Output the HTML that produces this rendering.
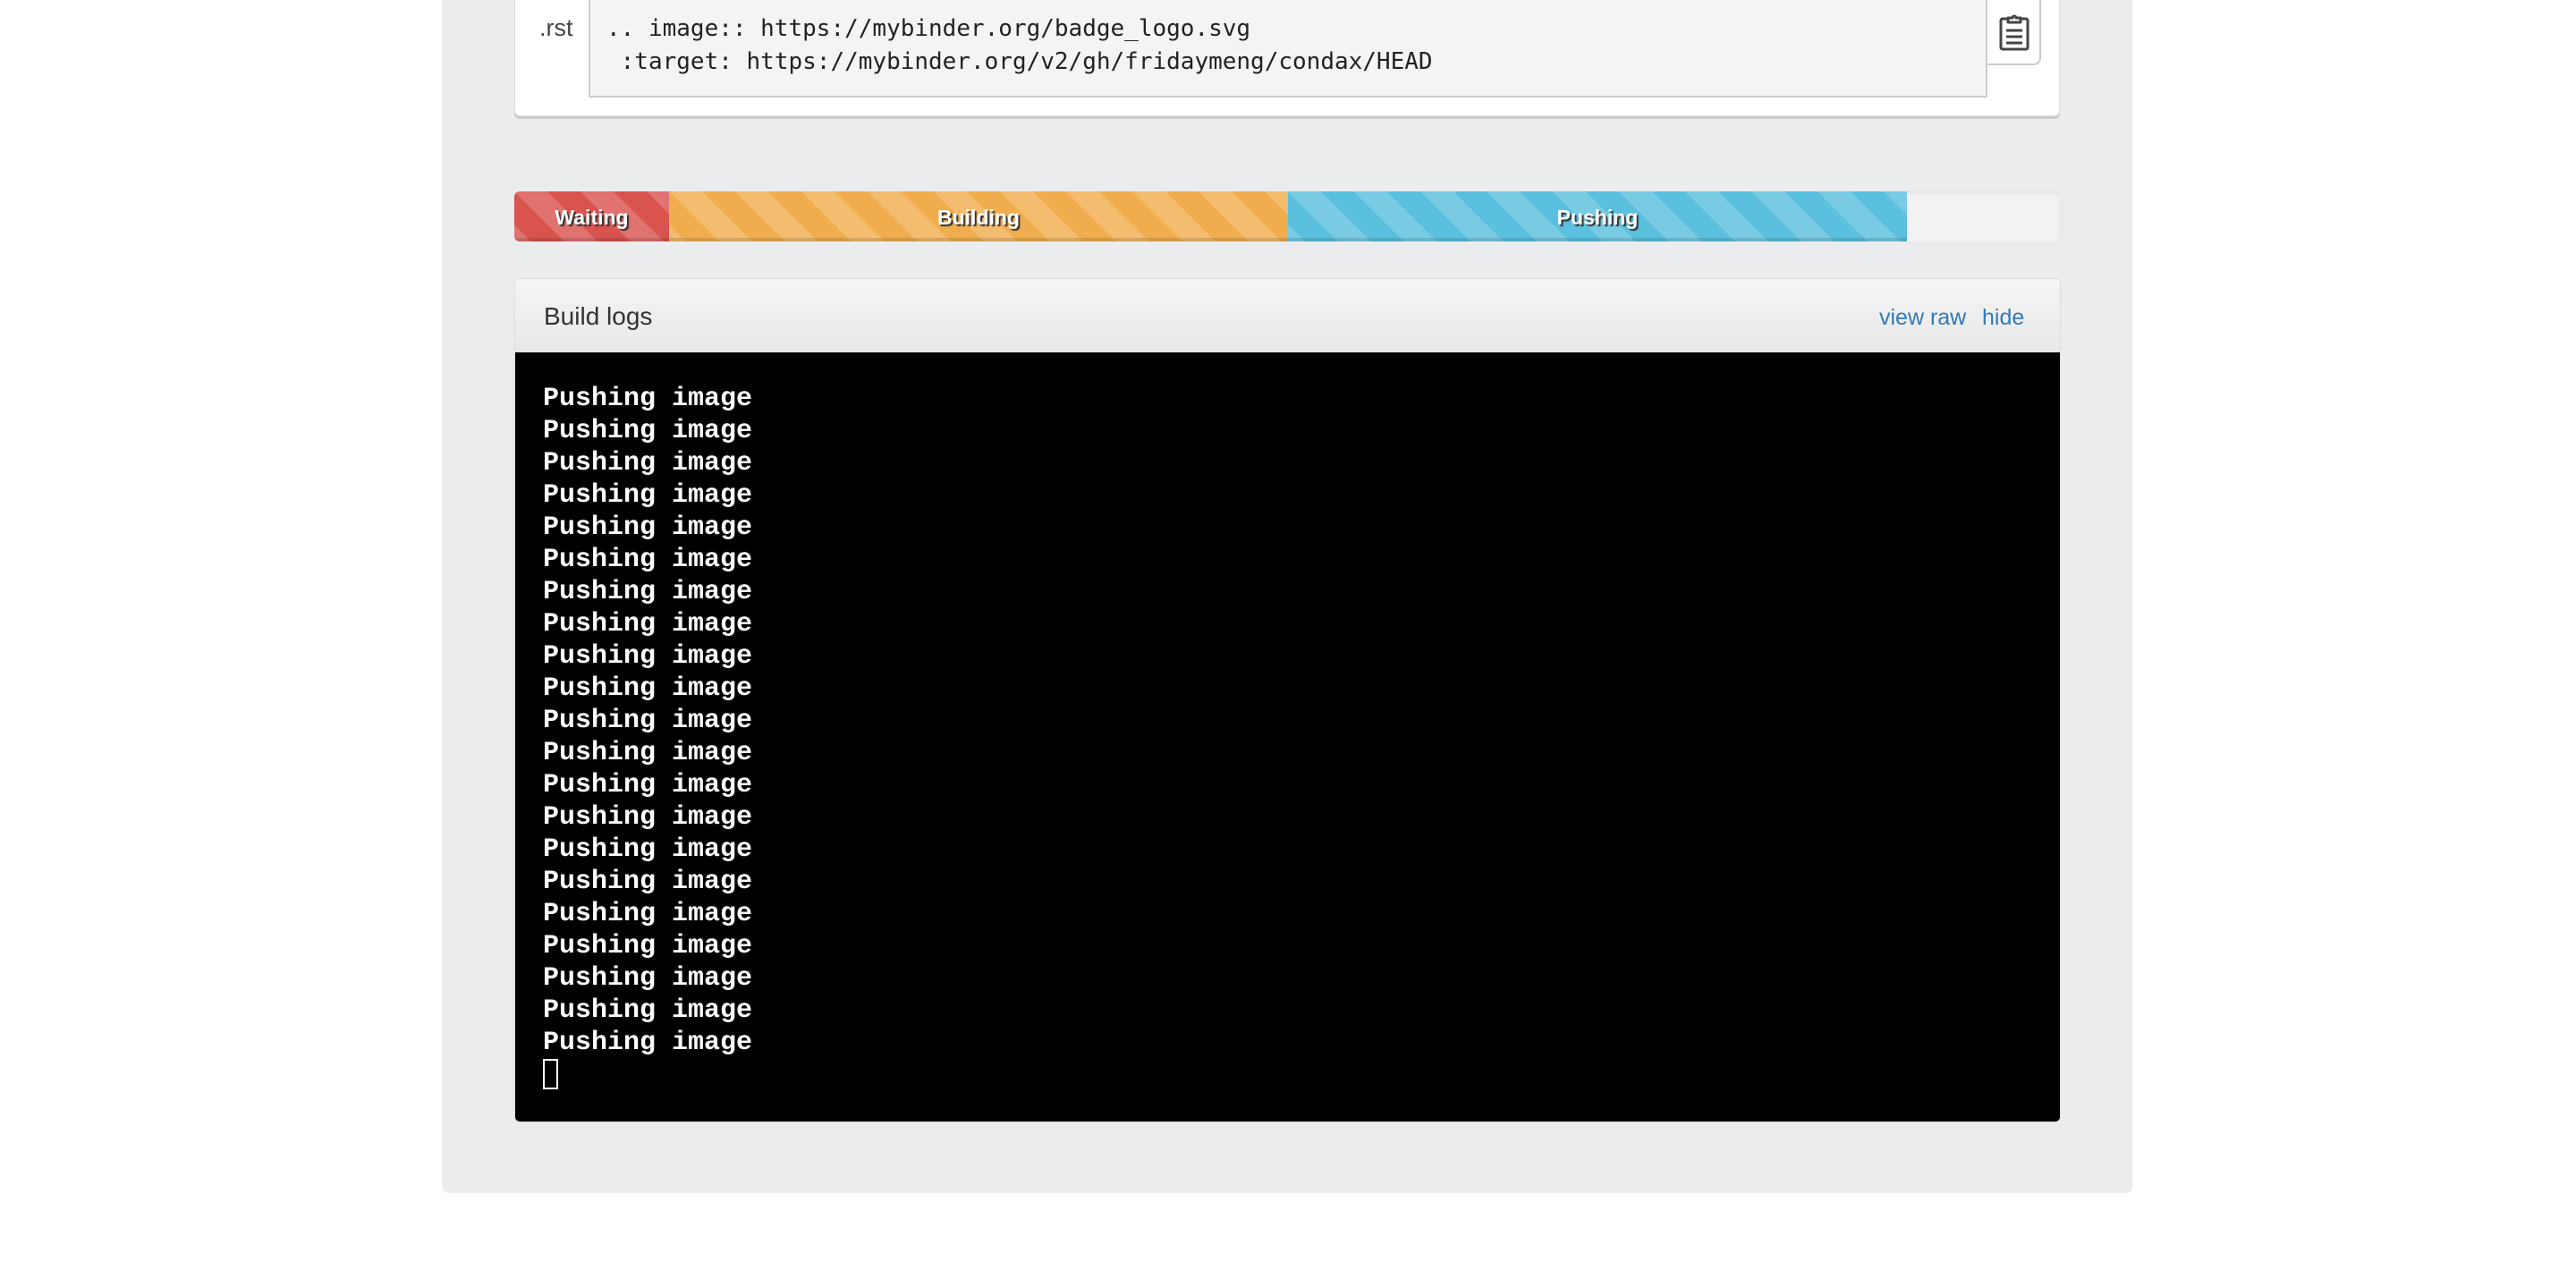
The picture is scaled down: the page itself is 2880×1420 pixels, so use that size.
<!DOCTYPE html>
<html><head><meta charset="utf-8"><style>
html,body{margin:0;padding:0;background:#fff;width:2880px;height:1420px;overflow:hidden;font-family:"Liberation Sans",sans-serif}
.outer{position:absolute;left:494px;top:-20px;width:1890px;height:1354px;background:#ebecee;border-radius:8px}
.top{position:absolute;left:575px;top:-10px;width:1726px;height:138px;background:#fff;border:1px solid #ddd;border-radius:6px;box-shadow:0 3px 0 #ccc}
.rst{position:absolute;left:603px;top:16px;font-size:27px;color:#444}
.code{position:absolute;left:658px;top:-10px;width:1564px;height:119px;background:#f4f4f4;border:2px solid #ccc;border-top:none;box-sizing:border-box;font-family:"DejaVu Sans Mono",monospace;font-size:26px;color:#222;padding:24px 0 0 18px;line-height:37px;white-space:pre}
.copy{position:absolute;left:2222px;top:-10px;width:60px;height:83px;border:2px solid #ccc;border-left:none;border-radius:0 0 8px 0;box-sizing:border-box;background:#fff}
.prog{position:absolute;left:575px;top:214px;width:1728px;height:56px;background:#f2f2f2;border-radius:6px;overflow:hidden;box-shadow:inset 0 2px 3px rgba(0,0,0,.08)}
.bar{position:absolute;top:0;height:56px;color:#fff;font-weight:bold;font-size:23px;line-height:58px;text-align:center;text-shadow:2px 2px 1px #333;background-image:linear-gradient(45deg,rgba(255,255,255,.18) 25%,transparent 25%,transparent 50%,rgba(255,255,255,.18) 50%,rgba(255,255,255,.18) 75%,transparent 75%);background-size:74px 74px;box-shadow:inset 0 -4px 0 rgba(0,0,0,.12)}
.logs{position:absolute;left:575px;top:311px;width:1729px;height:944px;border:1px solid #ddd;border-radius:6px;overflow:hidden;box-sizing:border-box}
.hdr{height:82px;background:linear-gradient(#f5f5f5,#e8e8e8);position:relative}
.hdr .t{position:absolute;left:32px;top:26px;font-size:28px;color:#333}
.hdr .l{position:absolute;top:29px;font-size:25px;color:#337ab7}
.term{background:#000;height:862px;padding:34px 0 0 31px;box-sizing:border-box;font-family:"Liberation Mono",monospace;font-weight:bold;font-size:30px;line-height:36px;color:#fff;white-space:pre}
.cur{display:inline-block;width:17px;height:34px;border:2px solid #fff;box-sizing:border-box;vertical-align:middle}
</style></head><body>
<div class="outer"></div>
<div class="top"></div>
<div class="rst">.rst</div>
<div class="code">.. image:: https://mybinder.org/badge_logo.svg
 :target: https://mybinder.org/v2/gh/fridaymeng/condax/HEAD</div>
<div class="copy"><svg width="60" height="83" viewBox="0 0 60 83"><g fill="none" stroke="#444" stroke-width="3" stroke-linejoin="round"><path d="M24 29h-7a2 2 0 0 0-2 2v30a2 2 0 0 0 2 2h26a2 2 0 0 0 2-2v-30a2 2 0 0 0-2-2h-7"/><path d="M23 33v-5h5a2 2 0 0 1 4 0h5v5z"/><path d="M21 42h18M21 49h18M21 56h18"/></g></svg></div>
<div class="prog">
<div class="bar" style="left:0;width:173px;background-color:#d9534f">Waiting</div>
<div class="bar" style="left:173px;width:692px;background-color:#f0ad4e">Building</div>
<div class="bar" style="left:865px;width:692px;background-color:#5bc0de">Pushing</div>
</div>
<div class="logs">
<div class="hdr"><span class="t">Build logs</span><span class="l" style="left:1525px">view raw</span><span class="l" style="left:1640px">hide</span></div>
<div class="term">Pushing image
Pushing image
Pushing image
Pushing image
Pushing image
Pushing image
Pushing image
Pushing image
Pushing image
Pushing image
Pushing image
Pushing image
Pushing image
Pushing image
Pushing image
Pushing image
Pushing image
Pushing image
Pushing image
Pushing image
Pushing image
<span class="cur"></span></div>
</div>
</body></html>
